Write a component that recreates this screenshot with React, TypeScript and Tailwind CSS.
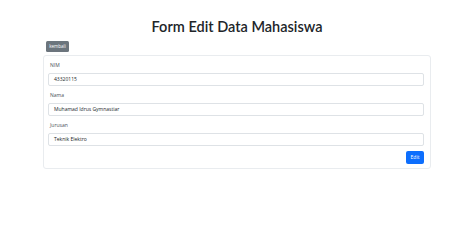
export default function App() {
  const fields = [
    { label: "NIM", value: "43320115" },
    { label: "Nama", value: "Muhamad Idrus Gymnastiar" },
    { label: "Jurusan", value: "Teknik Elektro" },
  ];
  return (
    <div className="w-[474px] h-[229px] bg-white text-[#212529]" style={{ fontFamily: '"Open Sans", "Noto Sans", sans-serif' }}>
      <h2 className="pt-[16px] text-center text-[14.5px] leading-[22px] font-semibold text-[#212529]" style={{ fontFamily: 'Lato, "Noto Sans", sans-serif' }}>Form Edit Data Mahasiswa</h2>
      <div className="mx-[43px] mt-[3px]">
        <div className="flex">
          <button className="ml-[3px] block h-[11px] w-[23px] rounded-[1.5px] bg-[#6c757d] text-[4.5px] leading-[11px] text-white">kembali</button>
        </div>
        <div className="mt-[3px] rounded-[3px] border border-[#e9ecef] pl-[4px] pr-[6px] pt-[5px] pb-[4px]">
          {fields.map((f) => (
            <div key={f.label} className="mb-[5.5px]">
              <div className="ml-[2px] mb-[3.5px] text-[5px] leading-[8px] text-[#495057]">{f.label}</div>
              <div className="h-[13px] rounded-[2px] border border-[#dee2e6] pl-[5px] text-[5px] leading-[11px] text-[#212529]">{f.value}</div>
            </div>
          ))}
          <div className="flex justify-end">
            <button className="block h-[13px] w-[18px] rounded-[2px] bg-[#0d6efd] text-[5px] leading-[13px] text-white">Edit</button>
          </div>
        </div>
      </div>
    </div>
  );
}
